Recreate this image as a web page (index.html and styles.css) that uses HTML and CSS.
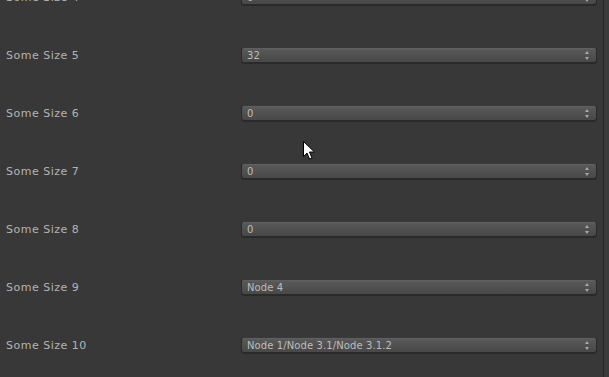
FILE: index.html
```html
<!DOCTYPE html>
<html lang="en">
<head>
  <meta charset="UTF-8">
  <title>Inspector</title>
  <link rel="stylesheet" href="styles.css">
</head>
<body>
  <div class="inspector">
    <div class="fields">
      <div class="row">
        <div class="label">Some Size 4</div>
        <div class="popup"><span class="value">0</span><span class="arrows"></span></div>
      </div>
      <div class="row">
        <div class="label">Some Size 5</div>
        <div class="popup"><span class="value">32</span><span class="arrows"></span></div>
      </div>
      <div class="row">
        <div class="label">Some Size 6</div>
        <div class="popup"><span class="value">0</span><span class="arrows"></span></div>
      </div>
      <div class="row">
        <div class="label">Some Size 7</div>
        <div class="popup"><span class="value">0</span><span class="arrows"></span></div>
      </div>
      <div class="row">
        <div class="label">Some Size 8</div>
        <div class="popup"><span class="value">0</span><span class="arrows"></span></div>
      </div>
      <div class="row">
        <div class="label">Some Size 9</div>
        <div class="popup"><span class="value">Node 4</span><span class="arrows"></span></div>
      </div>
      <div class="row">
        <div class="label">Some Size 10</div>
        <div class="popup"><span class="value">Node 1/Node 3.1/Node 3.1.2</span><span class="arrows"></span></div>
      </div>
    </div>
    <div class="scroll-edge"></div>
  </div>

  <!-- mouse pointer -->
  <svg class="cursor" width="13" height="20" viewBox="0 0 13 20">
    <path d="M0.5 0.5 L0.5 15.5 L4 12 L6.5 18 L9 17 L6.5 11 L11.5 11 Z" fill="#fff" stroke="#000" stroke-width="1"/>
  </svg>
</body>
</html>
```

FILE: styles.css
```css
body {
  margin: 0;
  background-color: #383838;
  font-family: "DejaVu Sans", Verdana, sans-serif;
  overflow: hidden;
}

.inspector {
  display: flex;
  height: 377px;
}

.fields {
  flex: 1;
  margin-top: -32px;
}

.row {
  display: flex;
  align-items: center;
  height: 58px;
}

.label {
  width: 235px;
  padding-left: 6px;
  font-size: 11px;
  letter-spacing: 0.5px;
  color: #b4b4b4;
}

.popup {
  flex: 1;
  margin-right: 6px;
  height: 14px;
  display: flex;
  align-items: center;
  justify-content: space-between;
  padding: 0 6px 0 5px;
  border: 1px solid #2a2a2a;
  border-top-color: #3a3a3a;
  border-radius: 3px;
  background: linear-gradient(to bottom, #626262 0%, #575757 15%, #4f4f4f 60%, #484848 100%);
  box-shadow: 0 1px 0 rgba(0, 0, 0, 0.25);
}

.value {
  font-size: 10px;
  letter-spacing: 0.1px;
  color: #bdbdbd;
}

.arrows {
  position: relative;
  width: 5px;
  height: 9px;
}

.arrows::before,
.arrows::after {
  content: "";
  position: absolute;
  left: 0;
  border-left: 2.5px solid transparent;
  border-right: 2.5px solid transparent;
}

.arrows::before {
  top: 0;
  border-bottom: 3px solid #a8a8a8;
}

.arrows::after {
  bottom: 0;
  border-top: 3px solid #a8a8a8;
}

.scroll-edge {
  width: 5px;
  background-color: #3b3b3b;
  border-left: 1px solid #262626;
}

.cursor {
  position: absolute;
  left: 303px;
  top: 141px;
}
```
